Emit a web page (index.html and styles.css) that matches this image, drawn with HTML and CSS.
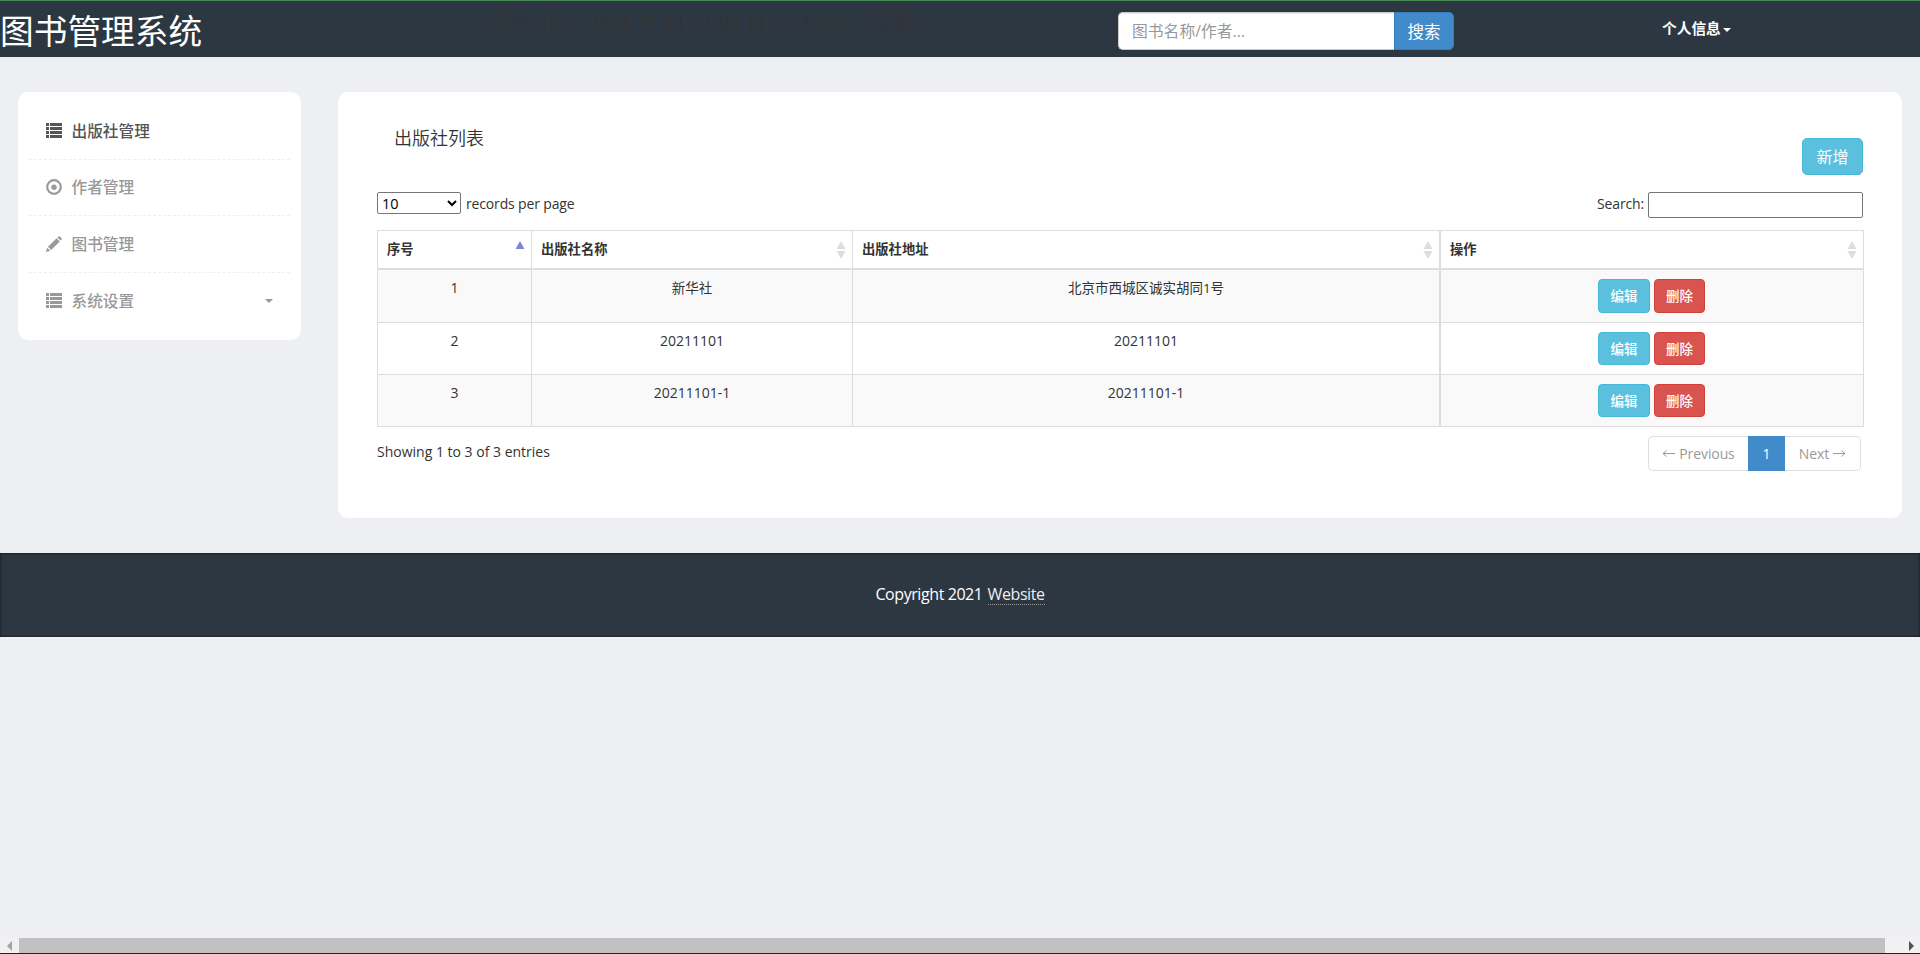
FILE: index.html
```html
<!DOCTYPE html>
<html lang="zh-CN">
<head>
<meta charset="utf-8">
<title>图书管理系统</title>
<link rel="stylesheet" href="styles.css">
</head>
<body>
<svg class="defs" width="0" height="0">
  <symbol id="list" viewBox="0 0 16 15"><path d="M0 0h3v3H0zM4 0h12v3H4zM0 4h3v3H0zM4 4h12v3H4zM0 8h3v3H0zM4 8h12v3H4zM0 12h3v3H0zM4 12h12v3H4z"/></symbol>
  <symbol id="sort" viewBox="0 0 10 18"><path d="M5 0l4.5 8h-9zM.5 10h9L5 18z"/></symbol>
</svg>
<header class="navbar">
  <h1 class="brand">图书管理系统</h1>
  <div class="clock"><span class="c1">系统时间：</span><span class="c2">2021 年 11 月 06 日 17:47:01</span><span class="c3">星期六</span></div>
  <form class="search">
    <input class="search-input" type="text" placeholder="图书名称/作者...">
    <button class="search-btn" type="button">搜索</button>
  </form>
  <a class="profile">个人信息<i class="caret"></i></a>
</header>
<div class="page">
  <nav class="sidebar">
    <a class="item current"><svg class="icon list"><use href="#list"/></svg><span>出版社管理</span></a>
    <a class="item"><svg class="icon" viewBox="0 0 16 16"><circle cx="8" cy="8" r="6.8" fill="none" stroke="#999" stroke-width="2.2"/><circle cx="8" cy="8.3" r="2.7"/></svg><span>作者管理</span></a>
    <a class="item"><svg class="icon" viewBox="0 0 16 16"><path d="M0 16l1.2-4.3 3.1 3.1zM2 10.8L10.6 2.3l3.2 3.2L5.2 14zM11.4 1.5l1-1q.7-.6 1.4 0l1.8 1.8q.6.7 0 1.3l-1 1z"/></svg><span>图书管理</span></a>
    <a class="item"><svg class="icon list"><use href="#list"/></svg><span>系统设置</span><i class="caret side"></i></a>
  </nav>
  <main class="panel">
    <div class="heading"><h2>出版社列表</h2><button class="btn add">新增</button></div>
    <div class="tools">
      <label class="length"><select><option>10</option></select><span>records per page</span></label>
      <label class="filter"><span>Search:</span><input type="text"></label>
    </div>
    <div class="table">
      <div class="tr head">
        <div class="th">序号<svg class="sort asc" viewBox="0 0 10 18"><path d="M5 0l4.5 8h-9z"/></svg></div>
        <div class="th">出版社名称<svg class="sort"><use href="#sort"/></svg></div>
        <div class="th">出版社地址<svg class="sort"><use href="#sort"/></svg></div>
        <div class="th">操作<svg class="sort"><use href="#sort"/></svg></div>
      </div>
      <div class="tr odd first"><div>1</div><div class="zh">新华社</div><div class="zh">北京市西城区诚实胡同1号</div><div class="act"><button class="btn edit">编辑</button><button class="btn del">删除</button></div></div>
      <div class="tr"><div>2</div><div>20211101</div><div>20211101</div><div class="act"><button class="btn edit">编辑</button><button class="btn del">删除</button></div></div>
      <div class="tr odd"><div>3</div><div>20211101-1</div><div>20211101-1</div><div class="act"><button class="btn edit">编辑</button><button class="btn del">删除</button></div></div>
    </div>
    <div class="bottom">
      <div class="info">Showing 1 to 3 of 3 entries</div>
      <div class="pager">
        <a class="prev"><svg class="arrow" viewBox="0 0 13 9"><path d="M13 4.5H1M4.5 1.5L1 4.5l3.500 3"/></svg><span>Previous</span></a>
        <a class="on">1</a>
        <a class="next"><span>Next</span><svg class="arrow" viewBox="0 0 13 9"><path d="M0 4.500h12M8.500 1.500l3.500 3-3.500 3"/></svg></a>
      </div>
    </div>
  </main>
</div>
<footer class="footer"><span>Copyright 2021</span><a>Website</a></footer>
<div class="scrollbar"><i class="left"></i><div class="thumb"></div><i class="right"></i></div>
</body>
</html>
```
FILE: styles.css
```css
* { box-sizing: border-box; }
body {
  margin: 0; height: 954px; overflow: hidden; display: flex; flex-direction: column;
  background: #eeeff3; color: #333;
  font-family: "Open Sans", "Noto Sans CJK SC", sans-serif; font-size: 14px; line-height: 20px;
}
.defs { position: absolute; }
button, input, select { font-family: inherit; margin: 0; }
h1, h2 { margin: 0; font-weight: 400; }

.navbar { height: 57px; flex: none; display: flex; background: #2c3742; border-top: 1px solid #468b56; }
.brand { width: 489px; color: #fff; font-size: 33.700px; line-height: 58px; font-family: "Noto Sans CJK SC", sans-serif; white-space: nowrap; }
.clock { width: 629px; display: flex; color: #333; font-size: 20px; line-height: 44px; font-weight: 300; white-space: nowrap; font-family: "Noto Sans CJK SC", sans-serif; }
.c1 { width: 100px; }
.c2 { width: 259px; margin-right: 24px; text-align-last: justify; }
.search { width: 336px; display: flex; height: 38px; margin-top: 11px; }
.search-input { width: 276px; border: 1px solid #ccc; border-right: 0; border-radius: 5px 0 0 5px; padding: 0 13px; font-size: 15.800px; box-shadow: inset 0 1px 1px rgba(0,0,0,.08); outline: 0; }
.search-input::placeholder { color: #999; }
.search-btn { width: 60px; padding: 0; color: #fff; background: #428bca; border: 1px solid #357ebd; border-radius: 0 5px 5px 0; font-size: 16.5px; }
.profile { margin-left: 208px; height: 54px; display: flex; align-items: center; color: #fff; font-weight: 700; font-size: 14.700px; }
.caret { width: 0; height: 0; border: 4.500px solid transparent; border-top-color: currentColor; border-bottom: 0; margin-left: 2px; margin-top: 3px; }

.page { display: flex; align-items: flex-start; gap: 37px; padding: 35px 18px 0; flex: none; height: 496px; }
.sidebar { width: 283px; height: 248px; background: #fff; border-radius: 10px; padding: 11px 11px 0; }
.item { display: flex; align-items: center; height: 56.500px; padding: 0 17px; border-bottom: 1px dashed #eee; color: #999; fill: #999; font-size: 15.700px; font-weight: 500; font-family: "Noto Sans CJK SC", sans-serif; }
.item:last-child { border-bottom: 0; }
.item.current { color: #555; fill: #555; }
.icon { width: 16px; height: 16px; margin-right: 9.500px; }
.icon.list { height: 15px; }
.caret.side { margin-left: auto; margin-top: 1px; }

.panel { width: 1564px; height: 426px; background: #fff; border-radius: 10px; padding: 0 38px 0 39px; }
.heading { display: flex; justify-content: space-between; height: 100px; padding: 0 1px 0 17px; }
.heading h2 { font-size: 18px; line-height: 90px; font-weight: 350; font-family: "Noto Sans CJK SC", sans-serif; }
.btn { color: #fff; border-radius: 4px; padding: 0 0 2px; border: 1px solid #46b8da; background: #5bc0de; }
.add { width: 61px; height: 37px; margin-top: 46px; font-size: 16px; border-radius: 5px; }
.tools { display: flex; justify-content: space-between; height: 38px; padding-right: 1px; letter-spacing: -.15px; }
.length, .filter { display: flex; align-items: flex-start; line-height: 23px; }
.length select { width: 84px; height: 22px; margin-right: 5px; padding-bottom: 1px; font-size: 14.500px; border: 1px solid #767676; border-radius: 2px; background: #fff; color: #000; }
.filter input { width: 215px; height: 26px; margin-left: 4px; border: 1px solid #767676; border-radius: 2px; }
.filter { line-height: 24px; }

.table { border: 1px solid #ddd; width: 1487px; }
.tr { display: grid; grid-template-columns: 154px 321px 588px 1fr; height: 52px; border-bottom: 1px solid #ddd; text-align: center; }
.tr:last-child { border-bottom: 0; height: 51px; }
.tr > div { border-right: 1px solid #ddd; padding-top: 8px; }
.tr > div:nth-child(3) { border-right-width: 2px; }
.tr > div:last-child { border-right: 0; }
.tr.first { height: 53px; }
.tr.odd { background: #f9f9f9; }
.tr .zh { font-size: 13.500px; }
.tr.head { height: 39px; border-bottom: 2px solid #ddd; }
.tr .th { display: flex; justify-content: space-between; padding: 8px 6px 0 9px; text-align: left; font-weight: 700; font-size: 13.300px; }
.sort { width: 10px; height: 18px; fill: #ddd; margin-top: 2px; }
.sort.asc { fill: #7b85dc; }
.tr .act { display: flex; justify-content: center; gap: 4px; padding-right: 1px; padding-top: 9px; }
.act .btn { width: 52px; height: 33px; font-size: 13.500px; font-weight: 500; }
.first .act .btn { height: 34px; }
.tr .act .del { width: 51px; background: #d9534f; border-color: #d43f3a; }

.bottom { display: flex; justify-content: space-between; padding: 9px 3px 0 0; }
.info { padding-top: 6px; }
.pager { display: flex; height: 35px; line-height: 33px; color: #999; letter-spacing: -.1px; }
.pager a { border: 1px solid #ddd; display: flex; justify-content: center; align-items: center; gap: 4px; }
.pager .prev { width: 100px; border-right: 0; border-radius: 5px 0 0 5px; }
.pager .on { width: 37px; background: #428bca; border-color: #428bca; color: #fff; }
.pager .next { width: 76px; border-left: 0; border-radius: 0 5px 5px 0; }
.arrow { width: 13px; height: 9px; fill: none; stroke: #999; stroke-width: 1; }

.footer { height: 84px; flex: none; display: flex; justify-content: center; align-items: flex-start; gap: 5px; padding-top: 31px; background: #2c3742; color: #fff; font-size: 16px; letter-spacing: -.42px; line-height: 20px; box-shadow: inset 0 0 3px #111; }
.footer a { border-bottom: 1px dotted #999; color: #eee; }

.scrollbar { margin-top: auto; height: 17px; flex: none; display: flex; align-items: center; justify-content: space-between; background: #f1f1f1; border-bottom: 1px solid #202428; padding: 1px 6px 0 7px; }
.thumb { width: 1866px; height: 15px; background: #c1c1c1; }
.left, .right { border: 5px solid transparent; }
.left { border-right-color: #a3a3a3; border-left: 0; }
.right { border-left-color: #505050; border-right: 0; margin-left: 17px; }
```
